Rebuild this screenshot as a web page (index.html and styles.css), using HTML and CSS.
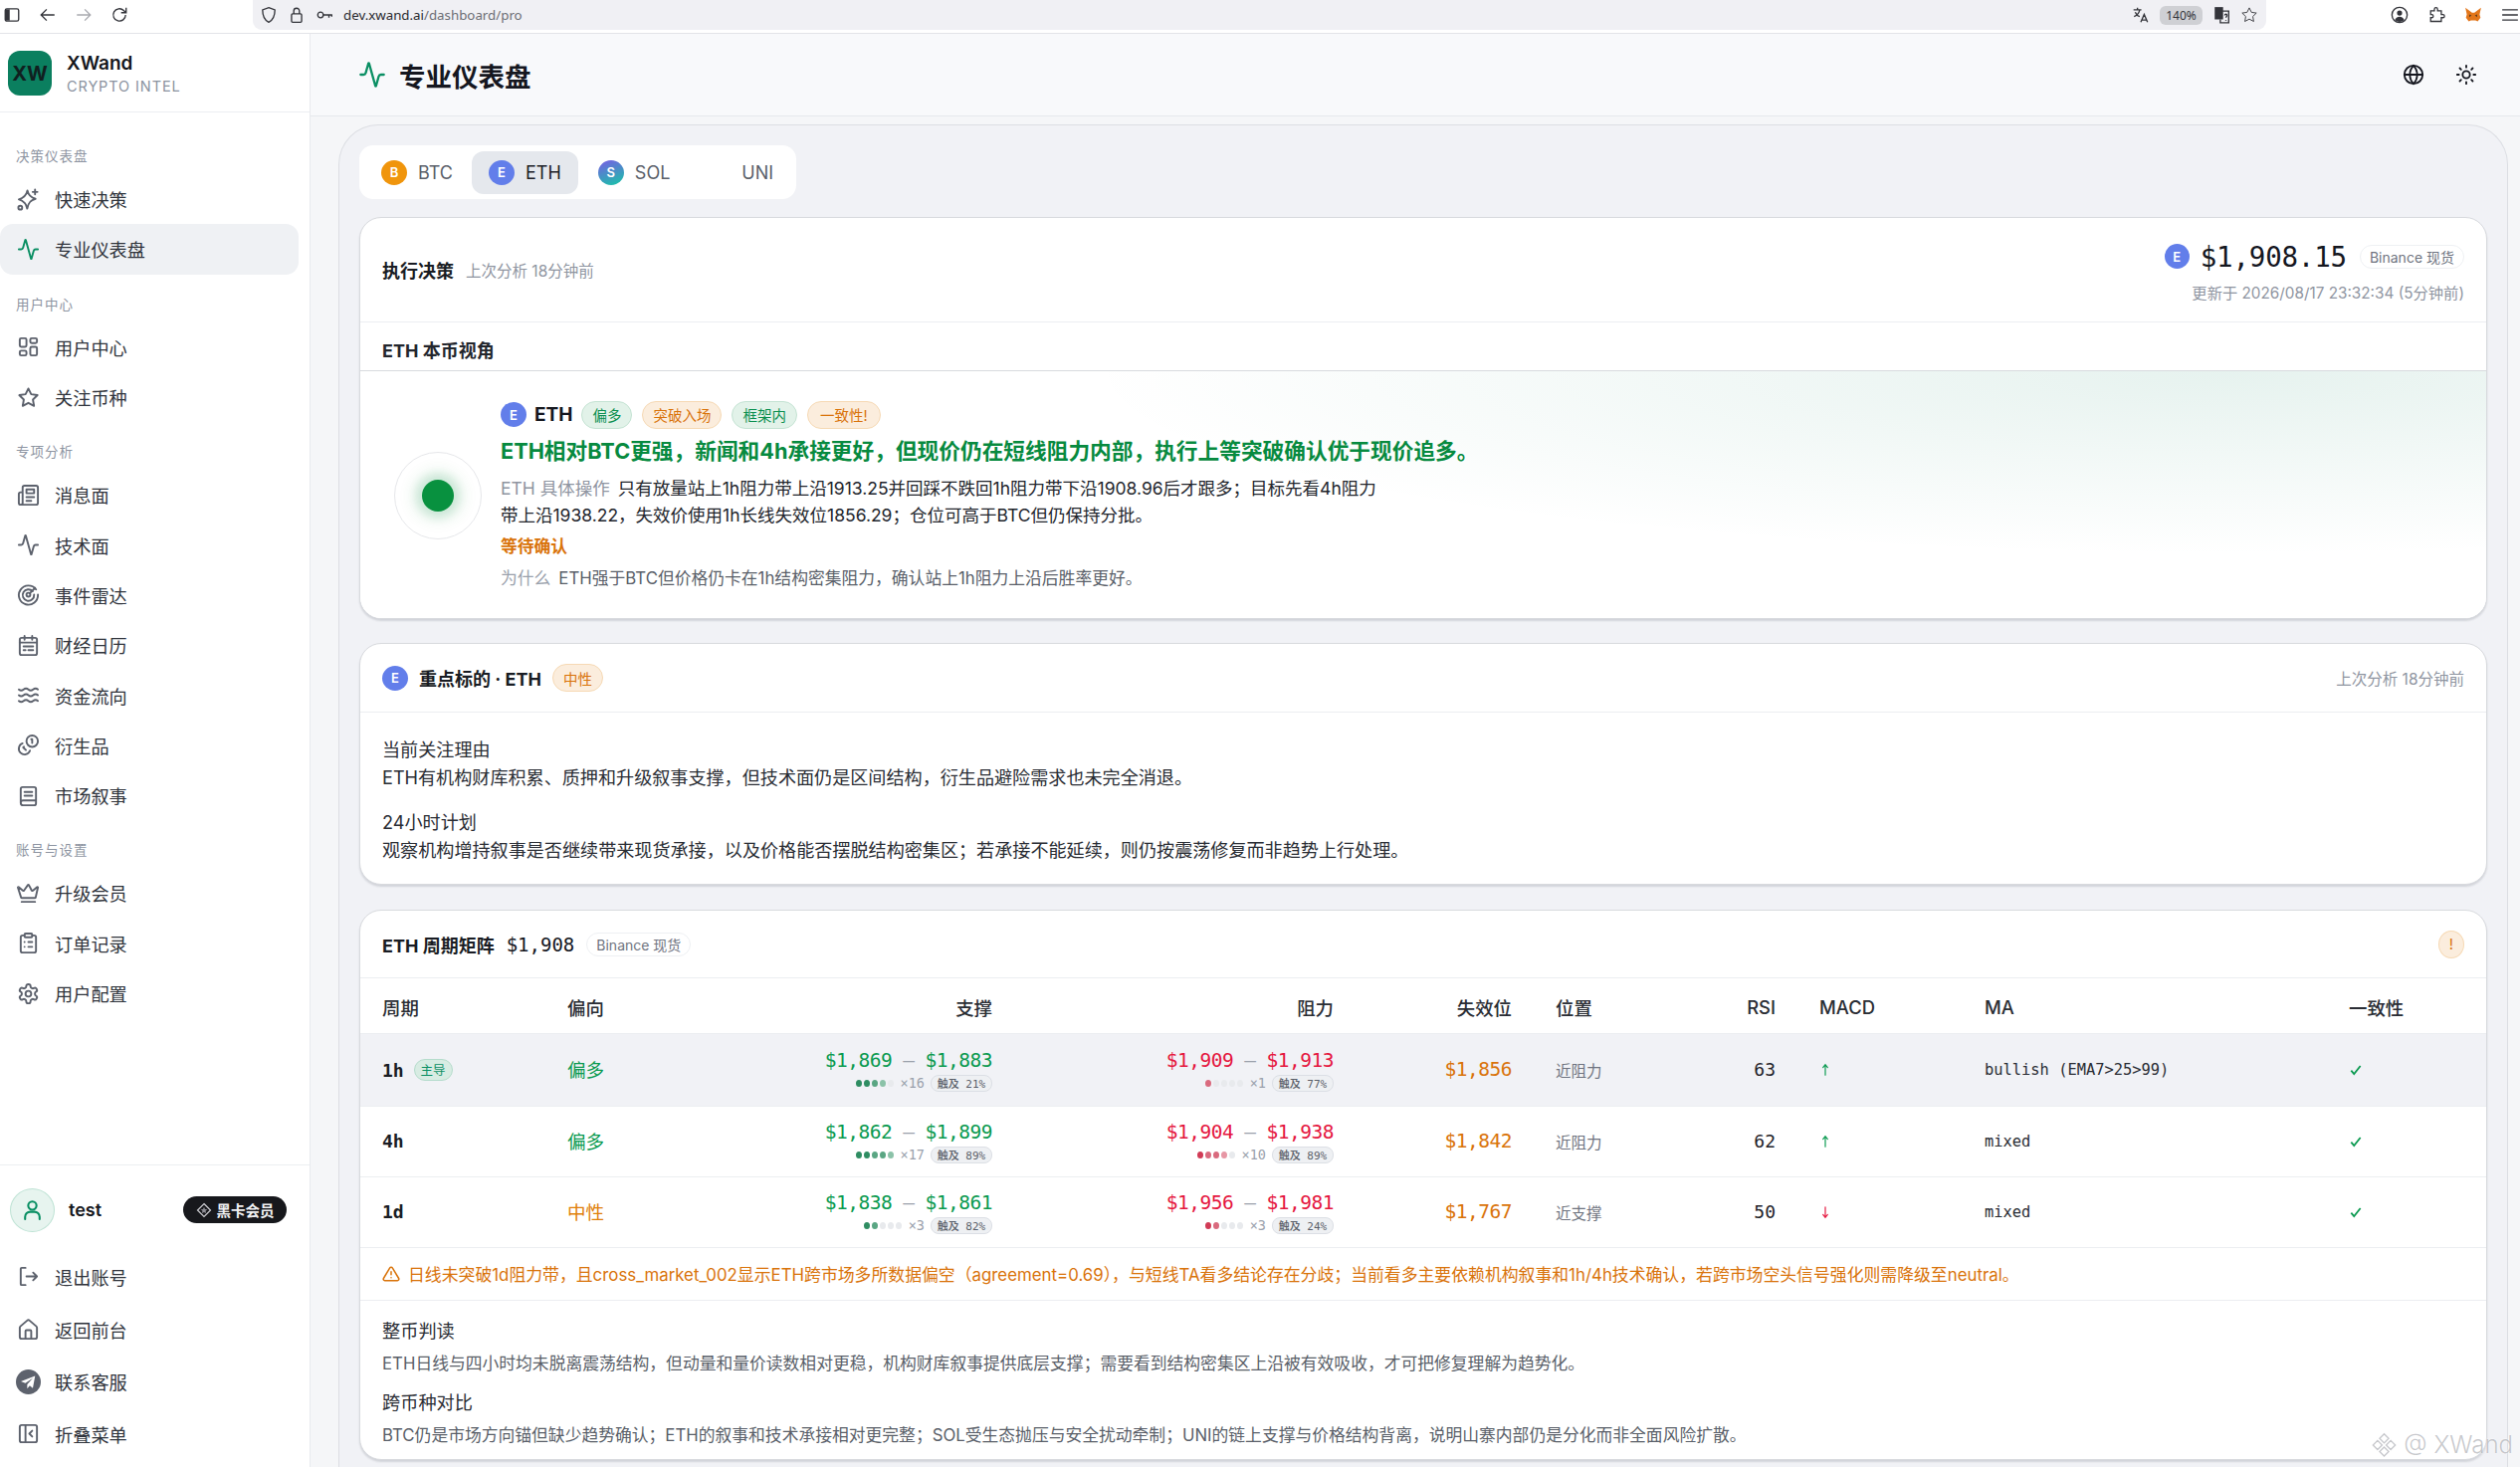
FILE: index.html
```html
<!DOCTYPE html>
<html lang="zh-CN">
<head>
<meta charset="utf-8">
<title>专业仪表盘</title>
<link rel="stylesheet" href="styles.css">
</head>
<body>
<svg class="sprite" xmlns="http://www.w3.org/2000/svg">
  <symbol id="i-activity" viewBox="0 0 24 24"><path d="M22 12h-2.48a2 2 0 0 0-1.93 1.46l-2.35 8.36a.25.25 0 0 1-.48 0L9.24 2.18a.25.25 0 0 0-.48 0l-2.35 8.36A2 2 0 0 1 4.49 12H2"/></symbol>
  <symbol id="i-sparkle" viewBox="0 0 24 24"><path d="M11 2.500c1 5 3.100 7.400 8.500 8.700-5.200 1.300-7.600 3.800-8.700 10.300-.8-2.200-1-4.200-2.500-5.800-1.400-1.500-3.500-3.100-6.300-3.900 5.400-1.500 7.900-3.900 9-9.300z"/><path d="M19 1.500v5M16.500 4h5"/><circle cx="3.500" cy="20.500" r="2"/></symbol>
  <symbol id="i-grid" viewBox="0 0 24 24"><rect x="3" y="3" width="7" height="9" rx="1.500"/><rect x="14" y="3" width="7" height="5" rx="1.500"/><rect x="14" y="12" width="7" height="9" rx="1.500"/><rect x="3" y="16" width="7" height="5" rx="1.500"/></symbol>
  <symbol id="i-star" viewBox="0 0 24 24"><path d="M12 2.500l2.950 6 6.600.95-4.780 4.650 1.130 6.580L12 17.570l-5.900 3.110 1.130-6.580-4.780-4.650 6.600-.95z"/></symbol>
  <symbol id="i-news" viewBox="0 0 24 24"><path d="M4 22h16a2 2 0 0 0 2-2V4a2 2 0 0 0-2-2H8a2 2 0 0 0-2 2v16a2 2 0 0 1-2 2Zm0 0a2 2 0 0 1-2-2v-9c0-1.100.9-2 2-2h2"/><path d="M18 14h-8M15 18h-5M10 6h8v4h-8V6Z"/></symbol>
  <symbol id="i-radar" viewBox="0 0 24 24"><path d="M20 6.500A10 10 0 1 0 22 12"/><path d="M16.500 8.500A6 6 0 1 0 18 12"/><circle cx="12" cy="12" r="2"/><path d="M13.500 10.500 19 5"/></symbol>
  <symbol id="i-cal" viewBox="0 0 24 24"><rect x="3" y="4" width="18" height="18" rx="2"/><path d="M8 2v4M16 2v4M3 9h18M7 13h10M7 17h2M12 17h5"/></symbol>
  <symbol id="i-waves" viewBox="0 0 24 24"><path d="M2 6c.6.5 1.200 1 2.500 1C7 7 7 5 9.500 5c2.600 0 2.400 2 5 2 2.500 0 2.500-2 5-2 1.300 0 1.900.5 2.500 1"/><path d="M2 12c.6.5 1.200 1 2.500 1 2.500 0 2.500-2 5-2 2.600 0 2.400 2 5 2 2.500 0 2.500-2 5-2 1.300 0 1.900.5 2.500 1"/><path d="M2 18c.6.5 1.200 1 2.500 1 2.500 0 2.500-2 5-2 2.600 0 2.400 2 5 2 2.500 0 2.500-2 5-2 1.300 0 1.900.5 2.500 1"/></symbol>
  <symbol id="i-coins" viewBox="0 0 24 24"><circle cx="16" cy="8" r="6"/><path d="M5.910 10.370A6 6 0 1 0 13.660 18"/><path d="M15 6h1v4"/><path d="m7.290 13.880-.7.710 2.820 2.820"/></symbol>
  <symbol id="i-book" viewBox="0 0 24 24"><path d="M4 19.500V5a2 2 0 0 1 2-2h12a2 2 0 0 1 2 2v15a2 2 0 0 1-2 2H6.500A2.500 2.500 0 0 1 4 19.500zm0 0A2.500 2.500 0 0 1 6.500 17H20"/><path d="M8 8h8M8 12h8"/></symbol>
  <symbol id="i-crown" viewBox="0 0 24 24"><path d="M11.560 3.270a.5.5 0 0 1 .88 0l2.950 5.600a1 1 0 0 0 1.520.3l4.280-3.660a.5.5 0 0 1 .8.5L19.660 16.300a1 1 0 0 1-.96.7H5.300a1 1 0 0 1-.96-.7L1.010 6.010a.5.5 0 0 1 .8-.5l4.280 3.660a1 1 0 0 0 1.520-.3z"/><path d="M5 21h14"/></symbol>
  <symbol id="i-clip" viewBox="0 0 24 24"><rect x="8" y="2" width="8" height="4" rx="1"/><path d="M16 4h2a2 2 0 0 1 2 2v14a2 2 0 0 1-2 2H6a2 2 0 0 1-2-2V6a2 2 0 0 1 2-2h2"/><path d="M12 11h4M12 16h4M8 11h.01M8 16h.01"/></symbol>
  <symbol id="i-gear" viewBox="0 0 24 24"><path d="M12.220 2h-.44a2 2 0 0 0-2 2v.18a2 2 0 0 1-1 1.730l-.43.25a2 2 0 0 1-2 0l-.15-.08a2 2 0 0 0-2.730.73l-.22.38a2 2 0 0 0 .73 2.730l.15.1a2 2 0 0 1 1 1.720v.51a2 2 0 0 1-1 1.740l-.15.09a2 2 0 0 0-.73 2.730l.22.38a2 2 0 0 0 2.730.73l.15-.08a2 2 0 0 1 2 0l.43.25a2 2 0 0 1 1 1.730V20a2 2 0 0 0 2 2h.44a2 2 0 0 0 2-2v-.18a2 2 0 0 1 1-1.730l.43-.25a2 2 0 0 1 2 0l.15.08a2 2 0 0 0 2.730-.73l.22-.39a2 2 0 0 0-.73-2.730l-.15-.08a2 2 0 0 1-1-1.740v-.5a2 2 0 0 1 1-1.740l.15-.09a2 2 0 0 0 .73-2.730l-.22-.38a2 2 0 0 0-2.730-.73l-.15.08a2 2 0 0 1-2 0l-.43-.25a2 2 0 0 1-1-1.730V4a2 2 0 0 0-2-2z"/><circle cx="12" cy="12" r="3"/></symbol>
  <symbol id="i-logout" viewBox="0 0 24 24"><path d="M9 3H5a1 1 0 0 0-1 1v16a1 1 0 0 0 1 1h4"/><path d="M10 12h11M17 8l4 4-4 4"/></symbol>
  <symbol id="i-home" viewBox="0 0 24 24"><path d="M3 10.500a2 2 0 0 1 .7-1.500l7-6a2 2 0 0 1 2.600 0l7 6a2 2 0 0 1 .7 1.500V20a2 2 0 0 1-2 2H5a2 2 0 0 1-2-2z"/><path d="M9 22v-8a1 1 0 0 1 1-1h4a1 1 0 0 1 1 1v8"/></symbol>
  <symbol id="i-panel" viewBox="0 0 24 24"><rect x="3" y="3" width="18" height="18" rx="2"/><path d="M9 3v18M16 9l-3 3 3 3"/></symbol>
  <symbol id="i-globe" viewBox="0 0 24 24"><circle cx="12" cy="12" r="10"/><path d="M12 2a14.500 14.500 0 0 0 0 20 14.500 14.500 0 0 0 0-20M2 12h20"/></symbol>
  <symbol id="i-sun" viewBox="0 0 24 24"><circle cx="12" cy="12" r="4"/><path d="M12 2v2M12 20v2M4.930 4.930l1.410 1.410M17.660 17.660l1.410 1.410M2 12h2M20 12h2M6.340 17.660l-1.410 1.410M19.070 4.930l-1.410 1.410"/></symbol>
  <symbol id="i-warn" viewBox="0 0 24 24"><path d="M10.300 3.900 1.800 18a2 2 0 0 0 1.700 3h17a2 2 0 0 0 1.700-3L13.700 3.900a2 2 0 0 0-3.400 0z"/><path d="M12 9v4M12 17h.01"/></symbol>
  <symbol id="i-up" viewBox="0 0 12 24"><path d="M6 21V3M2 8l4-5 4 5"/></symbol>
  <symbol id="i-down" viewBox="0 0 12 24"><path d="M6 3v18M2 16l4 5 4-5"/></symbol>
  <symbol id="i-check" viewBox="0 0 24 24"><path d="M4 13l5 6L20 5"/></symbol>
</svg>

<div class="browser">
  <div class="bcluster">
    <svg class="bico" viewBox="0 0 16 16"><rect x="2" y="2.500" width="12" height="11" rx="1.500"/><path class="fillbar" d="M2 3h4v10H2z"/></svg>
    <svg class="bico" viewBox="0 0 16 16"><path d="M14 8H2.500M7 3 2 8l5 5"/></svg>
    <svg class="bico dim" viewBox="0 0 16 16"><path d="M2 8h11.500M9 3l5 5-5 5"/></svg>
    <svg class="bico" viewBox="0 0 16 16"><path d="M13.500 8a5.500 5.500 0 1 1-1.700-4L14 6M14 1.500V6H9.500"/></svg>
  </div>
  <div class="urlbar">
    <svg class="bico" viewBox="0 0 16 16"><path d="M8 1.500 13.500 3.500c0 5-1.500 9-5.500 11-4-2-5.500-6-5.500-11z"/></svg>
    <svg class="bico" viewBox="0 0 16 16"><rect x="3.500" y="7" width="9" height="7.500" rx="1"/><path d="M5.500 7V4.500a2.500 2.500 0 0 1 5 0V7"/></svg>
    <svg class="bico" viewBox="0 0 16 16"><circle cx="4.500" cy="8" r="2.500"/><path d="M7 8h8M12 8v2.500M14.500 8v1.500"/></svg>
    <span class="url"><b>dev.xwand.ai</b>/dashboard/pro</span>
    <span class="urlright">
      <svg class="bico" viewBox="0 0 16 16"><path d="M1.500 3.500h7M5 1.500v2M7 3.500C6.500 6.500 4.500 8.500 2 9.500M3 5.500c.8 2 2.500 3.500 4 4M8 14.500l3-7 3 7M9 12.500h4"/></svg>
      <span class="zoompill">140%</span>
      <svg class="bico" viewBox="0 0 16 16"><path class="solid" d="M2 1h7.500v11H2z"/><path d="M9 4.500h5.500V15H7V12"/><path d="M11 8.500c0-1.500 2-1.500 2 0 0 1-1 1-1 2M12 12.500v.5"/></svg>
      <svg class="bico" viewBox="0 0 24 24"><use href="#i-star"/></svg>
    </span>
  </div>
  <div class="bcluster right">
    <svg class="bico" viewBox="0 0 16 16"><circle cx="8" cy="8" r="6.800"/><circle class="solid" cx="8" cy="6.300" r="2.300"/><path class="solid" d="M3.800 12.500c1-2.200 2.500-3 4.200-3s3.200.8 4.200 3c-2 2.200-6.400 2.200-8.400 0z"/></svg>
    <svg class="bico" viewBox="0 0 16 16"><path d="M6 4.500V3a1.500 1.500 0 0 1 3 0v1.500h3.500V8H14a1.500 1.500 0 0 1 0 3h-1.500v3.500h-10V11h1a1.500 1.500 0 0 0 0-3h-1V4.500z" transform="translate(.5 0) scale(.95)"/></svg>
    <svg class="bico fox" viewBox="0 0 16 16"><path d="M1 1.500 7 6H9l6-4.500-1.300 6 .8 3-2.500 3.300-2-1H6l-2 1-2.500-3.300.8-3z"/><path class="foxd" d="M4.500 7.500l2 1-2 1.500zM11.500 7.500l-2 1 2 1.500z"/></svg>
    <svg class="bico" viewBox="0 0 16 16"><path d="M1 3.500h14M1 8h14M1 12.500h14"/></svg>
  </div>
</div>

<div class="app">
  <aside class="sidebar">
    <div class="brand">
      <div class="logo">XW</div>
      <div class="brandtext">
        <div class="brandname">XWand</div>
        <div class="brandsub">CRYPTO INTEL</div>
      </div>
    </div>
    <nav class="nav">
      <div class="navlabel">决策仪表盘</div>
      <a class="navitem"><svg class="ico"><use href="#i-sparkle"/></svg>快速决策</a>
      <a class="navitem active"><svg class="ico"><use href="#i-activity"/></svg>专业仪表盘</a>
      <div class="navlabel">用户中心</div>
      <a class="navitem"><svg class="ico"><use href="#i-grid"/></svg>用户中心</a>
      <a class="navitem"><svg class="ico"><use href="#i-star"/></svg>关注币种</a>
      <div class="navlabel">专项分析</div>
      <a class="navitem"><svg class="ico"><use href="#i-news"/></svg>消息面</a>
      <a class="navitem"><svg class="ico"><use href="#i-activity"/></svg>技术面</a>
      <a class="navitem"><svg class="ico"><use href="#i-radar"/></svg>事件雷达</a>
      <a class="navitem"><svg class="ico"><use href="#i-cal"/></svg>财经日历</a>
      <a class="navitem"><svg class="ico"><use href="#i-waves"/></svg>资金流向</a>
      <a class="navitem"><svg class="ico"><use href="#i-coins"/></svg>衍生品</a>
      <a class="navitem"><svg class="ico"><use href="#i-book"/></svg>市场叙事</a>
      <div class="navlabel">账号与设置</div>
      <a class="navitem"><svg class="ico"><use href="#i-crown"/></svg>升级会员</a>
      <a class="navitem"><svg class="ico"><use href="#i-clip"/></svg>订单记录</a>
      <a class="navitem"><svg class="ico"><use href="#i-gear"/></svg>用户配置</a>
    </nav>
    <div class="sidefoot">
      <div class="userrow">
        <div class="avatar"><svg viewBox="0 0 24 24"><circle cx="12" cy="8" r="4"/><path d="M5 21v-2a5 5 0 0 1 5-5h4a5 5 0 0 1 5 5v2"/></svg></div>
        <span class="username">test</span>
        <span class="vip"><svg viewBox="0 0 16 16"><path class="vipd" d="M8 1.500 14.500 8 8 14.500 1.500 8z"/><path class="vips" d="M8 4.800l1 2.200 2.300.2-1.700 1.600.5 2.300L8 10l-2.100 1.100.5-2.300-1.700-1.600L7 7z"/></svg>黑卡会员</span>
      </div>
      <a class="navitem foot"><svg class="ico"><use href="#i-logout"/></svg>退出账号</a>
      <a class="navitem foot"><svg class="ico"><use href="#i-home"/></svg>返回前台</a>
      <a class="navitem foot"><svg class="ico tg" viewBox="0 0 24 24"><circle cx="12" cy="12" r="12"/><path class="tgp" d="M18.500 6.200 4.800 11.500l4.300 1.600 7.400-5-5.600 6.200v4.200l2.400-2.800 3 2.200z"/></svg>联系客服</a>
      <a class="navitem foot"><svg class="ico"><use href="#i-panel"/></svg>折叠菜单</a>
    </div>
  </aside>

  <main class="main">
    <header class="topbar">
      <h1 class="pagetitle"><svg class="titleico"><use href="#i-activity"/></svg>专业仪表盘</h1>
      <div class="topactions">
        <svg class="topico"><use href="#i-globe"/></svg>
        <svg class="topico"><use href="#i-sun"/></svg>
      </div>
    </header>

    <div class="panel">
      <div class="tabs">
        <div class="tab"><span class="coin btc">B</span>BTC</div>
        <div class="tab on"><span class="coin eth">E</span>ETH</div>
        <div class="tab"><span class="coin sol">S</span>SOL</div>
        <div class="tab uni">UNI</div>
      </div>

      <section class="card">
        <div class="cardhead exec">
          <div class="exectitle"><strong>执行决策</strong><span class="muted">上次分析 18分钟前</span></div>
          <div class="pricebox">
            <div class="priceline"><span class="coin eth big">E</span><span class="price">$1,908.15</span><span class="srcpill">Binance 现货</span></div>
            <div class="updated">更新于 2026/08/17 23:32:34 (5分钟前)</div>
          </div>
        </div>
        <div class="subhead">ETH 本币视角</div>
        <div class="hero">
          <div class="pulse"><span class="pulsedot"></span></div>
          <div class="herobody">
            <div class="herotags">
              <span class="coin eth">E</span><strong class="herosym">ETH</strong>
              <span class="tag g">偏多</span><span class="tag o">突破入场</span><span class="tag g">框架内</span><span class="tag o wide">一致性!</span>
            </div>
            <div class="herotitle">ETH相对BTC更强，新闻和4h承接更好，但现价仍在短线阻力内部，执行上等突破确认优于现价追多。</div>
            <p class="heroop"><span class="muted2">ETH 具体操作</span>只有放量站上1h阻力带上沿1913.25并回踩不跌回1h阻力带下沿1908.96后才跟多；目标先看4h阻力<br>带上沿1938.22，失效价使用1h长线失效位1856.29；仓位可高于BTC但仍保持分批。</p>
            <div class="herowait">等待确认</div>
            <p class="herowhy"><span class="muted3">为什么</span>ETH强于BTC但价格仍卡在1h结构密集阻力，确认站上1h阻力上沿后胜率更好。</p>
          </div>
        </div>
      </section>

      <section class="card">
        <div class="cardhead focus">
          <span class="coin eth">E</span><strong>重点标的 · ETH</strong><span class="tag o">中性</span>
          <span class="muted pushright">上次分析 18分钟前</span>
        </div>
        <div class="focusbody">
          <h3>当前关注理由</h3>
          <p>ETH有机构财库积累、质押和升级叙事支撑，但技术面仍是区间结构，衍生品避险需求也未完全消退。</p>
          <h3>24小时计划</h3>
          <p>观察机构增持叙事是否继续带来现货承接，以及价格能否摆脱结构密集区；若承接不能延续，则仍按震荡修复而非趋势上行处理。</p>
        </div>
      </section>

      <section class="card last">
        <div class="cardhead matrix">
          <strong>ETH 周期矩阵</strong><span class="matrixprice">$1,908</span><span class="srcpill">Binance 现货</span>
          <span class="warnbadge pushright">!</span>
        </div>
        <table class="mtable">
          <colgroup><col class="c1"><col class="c2"><col class="c3"><col class="c4"><col class="c5"><col class="c6"><col class="c7"><col class="c8"><col class="c9"><col class="c10"></colgroup>
          <thead>
            <tr><th>周期</th><th>偏向</th><th class="r">支撑</th><th class="r">阻力</th><th class="r">失效位</th><th>位置</th><th class="r">RSI</th><th>MACD</th><th>MA</th><th>一致性</th></tr>
          </thead>
          <tbody>
            <tr class="lead">
              <td class="tf">1h <span class="leadtag">主导</span></td><td class="bias up">偏多</td>
              <td class="r"><div class="range sup">$1,869<i>–</i>$1,883</div><div class="meta"><span class="dots g"><b class="a3"></b><b class="a3"></b><b class="a2"></b><b class="a1"></b><b></b></span><span class="cnt">×16</span><span class="touch">触及 21%</span></div></td>
              <td class="r"><div class="range res">$1,909<i>–</i>$1,913</div><div class="meta"><span class="dots r"><b class="a2"></b><b></b><b></b><b></b><b></b></span><span class="cnt">×1</span><span class="touch">触及 77%</span></div></td>
              <td class="r inval">$1,856</td><td class="pos">近阻力</td><td class="r rsi">63</td>
              <td><svg class="arrow up"><use href="#i-up"/></svg></td><td class="ma">bullish (EMA7&gt;25&gt;99)</td><td><svg class="chk"><use href="#i-check"/></svg></td>
            </tr>
            <tr>
              <td class="tf">4h</td><td class="bias up">偏多</td>
              <td class="r"><div class="range sup">$1,862<i>–</i>$1,899</div><div class="meta"><span class="dots g"><b class="a3"></b><b class="a3"></b><b class="a2"></b><b class="a2"></b><b class="a1"></b></span><span class="cnt">×17</span><span class="touch">触及 89%</span></div></td>
              <td class="r"><div class="range res">$1,904<i>–</i>$1,938</div><div class="meta"><span class="dots r"><b class="a3"></b><b class="a2"></b><b class="a2"></b><b class="a1"></b><b></b></span><span class="cnt">×10</span><span class="touch">触及 89%</span></div></td>
              <td class="r inval">$1,842</td><td class="pos">近阻力</td><td class="r rsi">62</td>
              <td><svg class="arrow up"><use href="#i-up"/></svg></td><td class="ma">mixed</td><td><svg class="chk"><use href="#i-check"/></svg></td>
            </tr>
            <tr>
              <td class="tf">1d</td><td class="bias mid">中性</td>
              <td class="r"><div class="range sup">$1,838<i>–</i>$1,861</div><div class="meta"><span class="dots g"><b class="a3"></b><b class="a2"></b><b></b><b></b><b></b></span><span class="cnt">×3</span><span class="touch">触及 82%</span></div></td>
              <td class="r"><div class="range res">$1,956<i>–</i>$1,981</div><div class="meta"><span class="dots r"><b class="a3"></b><b class="a2"></b><b></b><b></b><b></b></span><span class="cnt">×3</span><span class="touch">触及 24%</span></div></td>
              <td class="r inval">$1,767</td><td class="pos">近支撑</td><td class="r rsi">50</td>
              <td><svg class="arrow down"><use href="#i-down"/></svg></td><td class="ma">mixed</td><td><svg class="chk"><use href="#i-check"/></svg></td>
            </tr>
          </tbody>
        </table>
        <div class="warnrow"><svg class="warnico"><use href="#i-warn"/></svg>日线未突破1d阻力带，且cross_market_002显示ETH跨市场多所数据偏空（agreement=0.69），与短线TA看多结论存在分歧；当前看多主要依赖机构叙事和1h/4h技术确认，若跨市场空头信号强化则需降级至neutral。</div>
        <div class="notes">
          <h3>整币判读</h3>
          <p>ETH日线与四小时均未脱离震荡结构，但动量和量价读数相对更稳，机构财库叙事提供底层支撑；需要看到结构密集区上沿被有效吸收，才可把修复理解为趋势化。</p>
          <h3>跨币种对比</h3>
          <p>BTC仍是市场方向锚但缺少趋势确认；ETH的叙事和技术承接相对更完整；SOL受生态抛压与安全扰动牵制；UNI的链上支撑与价格结构背离，说明山寨内部仍是分化而非全面风险扩散。</p>
        </div>
      </section>
    </div>
  </main>
</div>
<div class="watermark"><svg viewBox="0 0 30 30"><path d="M15 2 20.500 7.500 15 13 9.500 7.500zM7 10l5.500 5.500L7 21 1.500 15.500zM23 10l5.500 5.500L23 21l-5.500-5.500zM15 18l5.500 5.500L15 29l-5.500-5.500z" transform="translate(15 15) scale(.92) translate(-15 -15)"/></svg><span>@ XWand</span></div>
</body>
</html>
```

FILE: styles.css
```css
* { box-sizing: border-box; }
html, body { margin: 0; height: 100%; }
body {
  width: 2532px; height: 1474px; overflow: hidden; position: relative;
  font-family: Inter, "Noto Sans CJK SC", sans-serif;
  color: #1a1d24; background: #f5f6f8; display: flex; flex-direction: column;
}
.sprite { display: none; }
svg { display: block; flex: none; }
p, h1, h3 { margin: 0; }

/* browser chrome */
.browser { height: 34px; flex: none; background: #fff; border-bottom: 1px solid #e3e4e8; display: flex; align-items: flex-start; position: relative; }
.bico { width: 18px; height: 18px; fill: none; stroke: #33343a; stroke-width: 1.200; }
.bico.dim { stroke: #a9aab0; }
.bico .fillbar, .bico .solid { fill: #33343a; stroke: none; }
.bcluster { display: flex; align-items: center; gap: 18px; height: 30px; padding-left: 3px; width: 254px; }
.bcluster.right { width: 255px; gap: 19px; padding-left: 125px; }
.urlbar { width: 2023px; height: 30px; background: #f0f0f4; border-radius: 0 0 9px 9px; display: flex; align-items: center; gap: 10px; padding: 0 8px 0 7px; }
.url { font-size: 13.300px; color: #6c6e75; font-family: "Noto Sans", sans-serif; }
.url b { font-weight: 400; color: #2a2b30; }
.urlright { margin-left: auto; display: flex; align-items: center; gap: 10px; }
.zoompill { width: 43px; height: 19px; border-radius: 6px; background: #cfd0d4; font-size: 12px; color: #33343a; display: flex; align-items: center; justify-content: center; font-family: "Noto Sans", sans-serif; }
.fox { fill: #e2761b; stroke: none; }
.fox .foxd { fill: #5b3a20; }

/* shell */
.app { flex: 1; display: flex; min-height: 0; }
.sidebar { width: 312px; flex: none; background: #fff; border-right: 1px solid #e8eaee; display: flex; flex-direction: column; }
.brand { height: 79px; flex: none; border-bottom: 1px solid #eceef1; display: flex; align-items: center; gap: 15px; padding: 0 0 0 8px; }
.logo { width: 44px; height: 45px; border-radius: 12px; background: #0b7f5f; color: #10201f; font: 700 20px/47px Inter, sans-serif; text-align: center; }
.brandname { font-size: 19px; font-weight: 600; line-height: 24px; color: #15171c; margin-top: 3px; }
.brandsub { font-size: 14.500px; line-height: 22px; letter-spacing: .9px; color: #8b93a0; font-weight: 400; }
.nav { padding-top: 34px; padding-right: 11px; display: flex; flex-direction: column; }
.navlabel { height: 20px; line-height: 20px; font-size: 13.500px; color: #8e95a2; padding-left: 16px; letter-spacing: 1px; margin: 20px 0 8px; }
.navlabel:first-child { margin-top: 0; }
.navitem { height: 50.300px; display: flex; align-items: center; gap: 15px; padding-left: 17px; font-size: 18.200px; color: #30343c; border-radius: 13px; }
.navitem.active { background: #eff1f4; }
.navitem.active .ico { stroke: #0a8f63; }
.ico { width: 23px; height: 23px; fill: none; stroke: #5d626d; stroke-width: 2; stroke-linecap: round; stroke-linejoin: round; }
.ico.tg { width: 25px; height: 25px; margin-left: -1px; margin-right: -1px; fill: #5d626d; stroke: none; }
.tgp { fill: #fff; }
.sidefoot { margin-top: auto; border-top: 1px solid #eceef1; padding: 23px 11px 7px 0; }
.userrow { display: flex; align-items: center; height: 44px; padding-left: 10px; margin-bottom: 19px; }
.avatar { width: 45px; height: 44px; border-radius: 50%; background: #e7f4ef; border: 1px solid #bfe3d5; display: flex; align-items: center; justify-content: center; }
.avatar svg { width: 25px; height: 25px; fill: none; stroke: #0a8f63; stroke-width: 2; stroke-linecap: round; }
.username { font-size: 18px; font-weight: 600; margin-left: 14px; color: #15171c; }
.vip { margin-left: auto; margin-right: 12px; width: 104px; height: 27px; border-radius: 14px; background: #17181c; color: #f1f1f3; font-size: 14.500px; font-weight: 700; display: flex; align-items: center; justify-content: center; gap: 5px; }
.vip svg { width: 16px; height: 16px; }
.vipd { fill: none; stroke: #cfcfd4; stroke-width: 1.200; }
.vips { fill: #8d8d94; }
.navitem.foot { height: 52.600px; }

/* main */
.main { flex: 1; min-width: 0; display: flex; flex-direction: column; }
.topbar { height: 83px; flex: none; border-bottom: 1px solid #e6e8ec; background: #f8f9fb; display: flex; align-items: center; padding: 0 43px 0 48px; justify-content: space-between; }
.pagetitle { display: flex; align-items: center; gap: 13px; font-size: 26.500px; font-weight: 700; color: #15171f; }
.titleico { width: 28px; height: 28px; fill: none; stroke: #0a8f63; stroke-width: 2; stroke-linecap: round; stroke-linejoin: round; }
.topactions { display: flex; gap: 31px; }
.topico { width: 22px; height: 22px; fill: none; stroke: #15171f; stroke-width: 2; stroke-linecap: round; }
.panel { flex: 1; min-height: 0; margin: 8px 12px 0 28px; padding: 20px 20px 0; background: #f1f2f6; border: 1px solid #dcdee3; border-bottom: 0; border-radius: 40px 40px 0 0; display: flex; flex-direction: column; gap: 24px; }
.tabs { align-self: flex-start; width: 439px; height: 54px; background: #fff; border-radius: 14px; display: flex; align-items: center; padding: 0 0 0 6px; margin-bottom: -6px; font-size: 18px; color: #5a5f69; }
.tab { height: 43px; display: flex; align-items: center; gap: 11px; padding: 0 16px; border-radius: 12px; }
.tab.on { background: #e5e8ed; color: #1d2027; margin: 0 4px 0 3px; padding: 0 17px; }
.tab.uni { margin-left: 56px; padding: 0; }
.coin { width: 26px; height: 25px; border-radius: 50%; display: inline-flex; align-items: center; justify-content: center; color: #fff; font-size: 13px; font-weight: 600; flex: none; }
.btc { background: #f0950c; }
.eth { background: #627eea; }
.sol { background: linear-gradient(160deg, #7a5be6, #14c7a6); }
.coin.big { width: 25px; }

.card { background: #fff; border: 1px solid #d8dade; border-radius: 22px; box-shadow: 0 2px 2px rgba(30,35,50,.14); overflow: hidden; flex: none; }
.card.last { margin-top: 1px; }
.muted { color: #8f95a1; font-size: 15.500px; }
.cardhead { display: flex; align-items: center; font-size: 18px; }
.cardhead strong { font-weight: 700; color: #191c23; }
.pushright { margin-left: auto; }
.exec { height: 105px; border-bottom: 1px solid #eceef1; padding: 0 22px; justify-content: space-between; }
.exectitle { display: flex; gap: 12px; align-items: center; }
.pricebox { display: flex; flex-direction: column; align-items: flex-end; gap: 8px; margin-top: 3px; }
.priceline { display: flex; align-items: center; }
.price { font-family: "DejaVu Sans Mono", monospace; font-size: 27.500px; letter-spacing: -.2px; font-weight: 500; margin: 0 13px 0 11px; color: #15171f; }
.srcpill { font-size: 14px; color: #6f7480; border: 1px solid #eef0f3; border-radius: 12px; height: 24px; padding: 0 9px; display: inline-flex; align-items: center; gap: 6px; }
.updated { font-size: 15.300px; color: #8f95a1; }
.subhead { height: 49px; display: flex; align-items: center; padding: 5px 0 0 22px; font-size: 18px; font-weight: 700; color: #23262d; border-bottom: 1px solid #d8dade; }
.hero { height: 248px; display: flex; padding: 28.500px 0 0 34px; gap: 19px; background: radial-gradient(1150px 185px at 88% 0, rgba(12,130,95,.1), rgba(12,130,95,.05) 50%, rgba(12,130,95,0) 100%), #fff; }
.pulse { width: 88px; height: 88px; margin-top: 52px; border-radius: 50%; border: 1px solid #e6e7ea; background: #fff; display: flex; align-items: center; justify-content: center; flex: none; }
.pulsedot { width: 32px; height: 32px; border-radius: 50%; background: #08913f; box-shadow: 0 0 8px 6px rgba(8,145,63,.14), 0 0 14px 12px rgba(8,145,63,.07); }
.herobody { min-width: 0; }
.herotags { display: flex; align-items: center; height: 30px; }
.herosym { font-size: 19px; font-weight: 700; margin: 0 9px 0 8px; color: #15171f; }
.tag { height: 28px; padding: 0 10px; border-radius: 14px; font-size: 14.500px; display: inline-flex; align-items: center; border: 1px solid; margin-right: 10px; }
.tag.wide { padding: 0 12px; }
.tag.g { background: #e2f2e9; border-color: #c4e3d3; color: #0a8f4f; }
.tag.o { background: #fbeddd; border-color: #f6d9b4; color: #d9730a; }
.herotitle { font-size: 21.700px; font-weight: 700; color: #078a3f; line-height: 30px; margin-top: 6.500px; white-space: nowrap; }
.heroop { font-size: 17.500px; line-height: 27px; margin-top: 8.500px; color: #23262d; }
.muted2 { color: #8f95a1; margin-right: 8px; }
.herowait { font-size: 16.800px; font-weight: 700; color: #d9730a; line-height: 24px; margin-top: 6px; }
.herowhy { font-size: 16.800px; line-height: 26px; color: #5a5f69; margin-top: 7px; }
.muted3 { color: #9aa1ac; margin-right: 8px; }

.focus { height: 69px; padding: 0 22px; border-bottom: 1px solid #eceef1; }
.focus .coin { margin-right: 11px; }
.focus .tag { margin-left: 11px; }
.focusbody { padding: 23px 22px 0; height: 172px; }
.focusbody h3 { font-size: 18.100px; font-weight: 400; line-height: 28px; color: #2a2d34; }
.focusbody p { font-size: 18.100px; line-height: 28px; color: #2a2d34; margin-bottom: 17px; }

.matrix { height: 68px; padding: 0 22px; border-bottom: 1px solid #eceef1; }
.matrixprice { font-family: "DejaVu Sans Mono", monospace; font-size: 19px; font-weight: 500; margin: 0 12px 0 12px; color: #15171f; }
.warnbadge { width: 26px; height: 28px; border-radius: 50%; background: #fbeddd; border: 1px solid #f6d9b4; color: #d9730a; font-size: 15px; display: flex; align-items: center; justify-content: center; }
.mtable { width: 100%; table-layout: fixed; border-collapse: collapse; }
.c1 { width: 186px; } .c2 { width: 170px; } .c3 { width: 301px; } .c4 { width: 343px; } .c5 { width: 179px; }
.c6 { width: 171px; } .c7 { width: 94px; } .c8 { width: 166px; } .c9 { width: 366px; } .c10 { width: 161px; }
.mtable th { height: 55px; font-size: 18.400px; font-weight: 500; color: #2a2d34; text-align: left; padding: 3px 22px 0; border-bottom: 1px solid #eceef1; }
.mtable th.r, .mtable td.r { text-align: right; }
.mtable td { height: 71px; padding: 0 22px; border-bottom: 1px solid #eceef1; vertical-align: middle; }
.mtable tr.lead td { height: 73px; background: #f1f2f6; }
.tf { font-family: "DejaVu Sans Mono", monospace; font-size: 18px; font-weight: 600; color: #1a1d24; white-space: nowrap; }
.leadtag { display: inline-flex; align-items: center; justify-content: center; width: 39px; height: 22px; border-radius: 11px; background: #d8ece3; border: 1px solid #b5dccc; color: #0a8f63; font: 400 12.500px "Noto Sans CJK SC", sans-serif; vertical-align: 1px; margin-left: -1px; }
.bias { font-size: 18.600px; font-weight: 400; padding-bottom: 2px; }
.mtable td.bias { padding-bottom: 2px; }
.bias.up { color: #0a9a50; }
.bias.mid { color: #e07f0a; }
.range { font-family: "DejaVu Sans Mono", monospace; font-size: 19.500px; letter-spacing: -.5px; line-height: 26px; white-space: nowrap; }
.range i { font-style: normal; color: #9ba1ac; padding: 0 11px; }
.sup { color: #0a9a50; }
.res { color: #e5173f; }
.meta { display: flex; align-items: center; justify-content: flex-end; gap: 7px; height: 17px; margin-top: 1px; }
.dots { display: flex; gap: 2px; }
.dots b { width: 6px; height: 7px; border-radius: 50%; background: #e8eaed; }
.dots.g .a3 { background: #2f8d62; } .dots.g .a2 { background: #5aa683; } .dots.g .a1 { background: #8bc2a8; }
.dots.r .a3 { background: #d13b56; } .dots.r .a2 { background: #d96a7e; } .dots.r .a1 { background: #e797a5; }
.cnt { font-family: "DejaVu Sans Mono", monospace; font-size: 13.500px; color: #9aa1ac; margin-left: 0; }
.touch { width: 62px; height: 17px; border: 1px solid #dcdfe5; background: #eef0f3; border-radius: 8px; font-family: "DejaVu Sans Mono", "Noto Sans CJK SC", monospace; font-size: 11px; color: #5a5f69; display: inline-flex; align-items: center; justify-content: center; white-space: nowrap; margin-left: -1px; font-weight: 500; }
.inval { font-family: "DejaVu Sans Mono", monospace; font-size: 19.500px; letter-spacing: -.5px; color: #d9730a; }
.pos { font-size: 15.500px; color: #6f7480; }
.rsi { font-family: "DejaVu Sans Mono", monospace; font-size: 18px; color: #1f2229; }
.arrow { width: 12px; height: 14px; fill: none; stroke-width: 2; stroke-linecap: round; }
.arrow.up { stroke: #0a9a50; }
.arrow.down { stroke: #e5173f; }
.ma { font-family: "DejaVu Sans Mono", monospace; font-size: 15.400px; color: #2a2d34; white-space: nowrap; }
.chk { width: 14px; height: 14px; fill: none; stroke: #0a9a50; stroke-width: 3; }
.warnrow { height: 53px; padding: 0 22px; display: flex; align-items: center; gap: 8px; border-bottom: 1px solid #eceef1; font-size: 16.850px; color: #d9730a; white-space: nowrap; }
.warnico { width: 18px; height: 18px; fill: none; stroke: #d9730a; stroke-width: 2; stroke-linecap: round; stroke-linejoin: round; }
.notes { padding: 15px 22px 0; }
.notes h3 { font-size: 18.200px; font-weight: 400; color: #2a2d34; line-height: 30px; }
.notes p { font-size: 16.800px; line-height: 26px; color: #5a5f69; margin: 5px 0 11px; }
.watermark { position: absolute; right: 7px; bottom: 8px; display: flex; align-items: center; gap: 6px; font-size: 24px; font-weight: 300; color: rgba(120,124,132,.42); font-family: Inter, sans-serif; text-shadow: 0 0 2px #fff; }
.watermark svg { width: 27px; height: 27px; fill: none; stroke: rgba(130,134,142,.45); stroke-width: 1.600; }
```
